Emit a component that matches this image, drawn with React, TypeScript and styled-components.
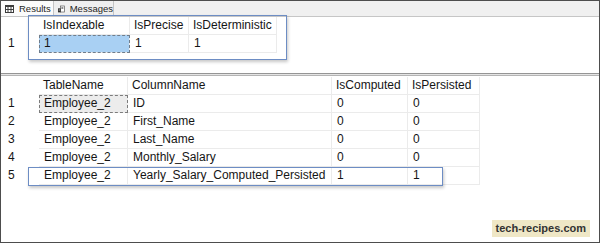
import { Fragment } from 'react';
import styled, { createGlobalStyle } from 'styled-components';

const GlobalStyle = createGlobalStyle`
  html, body {
    margin: 0;
    padding: 0;
    background: #ffffff;
  }
  body {
    font-family: "Liberation Sans", Arial, sans-serif;
  }
`;

const Frame = styled.div`
  position: relative;
  width: 600px;
  height: 243px;
  box-sizing: border-box;
  border: 1px solid #4d4d4d;
  background: #ffffff;
  display: flex;
  flex-direction: column;
  overflow: hidden;
`;

const TabBar = styled.div`
  display: flex;
  flex-shrink: 0;
  height: 15px;
  background: #f0f0f0;
  border-bottom: 1px solid #c6c6c6;
`;

const Tab = styled.div<{ $active?: boolean; $width: number }>`
  display: flex;
  align-items: center;
  gap: 5px;
  box-sizing: border-box;
  width: ${(p) => p.$width}px;
  padding-left: 4px;
  font-size: 9.5px;
  color: #1e1e1e;
  background: ${(p) => (p.$active ? '#fbfbfb' : '#efefef')};
  border-right: 1px solid #c4c4c4;
`;

const Pane = styled.div<{ $height?: number }>`
  position: relative;
  ${(p) => (p.$height ? `height: ${p.$height}px; flex-shrink: 0;` : 'flex: 1;')}
  padding-top: ${(p) => (p.$height ? 0 : 1)}px;
`;

const Splitter = styled.div`
  flex-shrink: 0;
  height: 1px;
  background: #e4e4e4;
  border-top: 1px solid #959595;
  border-bottom: 1px solid #b4b4b4;
`;

const Grid = styled.div<{ $cols: string }>`
  display: grid;
  grid-template-columns: ${(p) => p.$cols};
  grid-auto-rows: 18px;
  width: max-content;
`;

const Cell = styled.div<{ $head?: boolean; $sel?: 'active' | 'inactive' }>`
  box-sizing: border-box;
  padding-left: ${(p) => (p.$head ? 4 : 5)}px;
  font-size: 12px;
  line-height: 17px;
  color: #151515;
  white-space: nowrap;
  border-right: 1px solid #ebebeb;
  border-bottom: 1px solid #ebebeb;
  ${(p) =>
    p.$sel === 'active' &&
    `background: #a9d0f3; outline: 1px dashed #6f7d8c; outline-offset: -1px;`}
  ${(p) =>
    p.$sel === 'inactive' &&
    `background: #ececec; outline: 1px dashed #7c7c7c; outline-offset: -1px;`}
`;

const RowNum = styled.div`
  box-sizing: border-box;
  padding-left: 7px;
  font-size: 12px;
  line-height: 17px;
  color: #151515;
`;

const Highlight = styled.div<{ $left: number; $top: number; $width: number; $height: number }>`
  position: absolute;
  left: ${(p) => p.$left}px;
  top: ${(p) => p.$top}px;
  width: ${(p) => p.$width}px;
  height: ${(p) => p.$height}px;
  box-sizing: border-box;
  border: 1px solid #6d8dc4;
  box-shadow: 1px 2px 3px rgba(0, 0, 0, 0.22);
  pointer-events: none;
`;

const Watermark = styled.div`
  position: absolute;
  right: 9px;
  bottom: 5px;
  padding: 0 4px;
  height: 17px;
  line-height: 17px;
  background: #efe7c6;
  color: #333333;
  font-size: 11px;
  font-weight: bold;
`;

const ResultsIcon = () => (
  <svg width="9" height="8" viewBox="0 0 9 8">
    <rect x="0.5" y="0.5" width="8" height="7" fill="#fff" stroke="#3c3c3c" />
    <rect x="0" y="0" width="9" height="2" fill="#3c3c3c" />
    <line x1="3" y1="2" x2="3" y2="8" stroke="#3c3c3c" />
    <line x1="6" y1="2" x2="6" y2="8" stroke="#3c3c3c" />
    <line x1="0" y1="4.5" x2="9" y2="4.5" stroke="#3c3c3c" />
  </svg>
);

const MessagesIcon = () => (
  <svg width="10" height="10" viewBox="0 0 10 10">
    <rect x="3.5" y="0.5" width="6" height="9" fill="#fff" stroke="#555" />
    <rect x="5" y="2" width="3" height="1" fill="#555" />
    <rect x="5" y="4" width="3" height="1" fill="#555" />
    <rect x="0" y="4" width="4" height="6" fill="#2f2f2f" />
    <rect x="1" y="6" width="2" height="1" fill="#fff" />
  </svg>
);

const topCols = '38px 91px 59px 88px';
const bottomCols = '38px 89px 204px 76px 72px';

const rows = [
  ['Employee_2', 'ID', '0', '0'],
  ['Employee_2', 'First_Name', '0', '0'],
  ['Employee_2', 'Last_Name', '0', '0'],
  ['Employee_2', 'Monthly_Salary', '0', '0'],
  ['Employee_2', 'Yearly_Salary_Computed_Persisted', '1', '1'],
];

export default function App() {
  return (
    <>
      <GlobalStyle />
      <Frame>
        <TabBar>
          <Tab $active $width={53}>
            <ResultsIcon />
            Results
          </Tab>
          <Tab $width={60}>
            <MessagesIcon />
            Messages
          </Tab>
        </TabBar>

        <Pane $height={56}>
          <Grid $cols={topCols}>
            <RowNum />
            <Cell $head>IsIndexable</Cell>
            <Cell $head>IsPrecise</Cell>
            <Cell $head>IsDeterministic</Cell>
            <RowNum>1</RowNum>
            <Cell $sel="active">1</Cell>
            <Cell>1</Cell>
            <Cell>1</Cell>
          </Grid>
        </Pane>

        <Splitter />

        <Pane>
          <Grid $cols={bottomCols}>
            <RowNum />
            <Cell $head>TableName</Cell>
            <Cell $head>ColumnName</Cell>
            <Cell $head>IsComputed</Cell>
            <Cell $head>IsPersisted</Cell>
            {rows.map((r, i) => (
              <Fragment key={i}>
                <RowNum>{i + 1}</RowNum>
                {r.map((v, j) => (
                  <Cell key={j} $sel={i === 0 && j === 0 ? 'inactive' : undefined}>
                    {v}
                  </Cell>
                ))}
              </Fragment>
            ))}
          </Grid>
        </Pane>

        <Highlight $left={27} $top={14} $width={259} $height={45} />
        <Highlight $left={27} $top={166} $width={415} $height={19} />
        <Watermark>tech-recipes.com</Watermark>
      </Frame>
    </>
  );
}
